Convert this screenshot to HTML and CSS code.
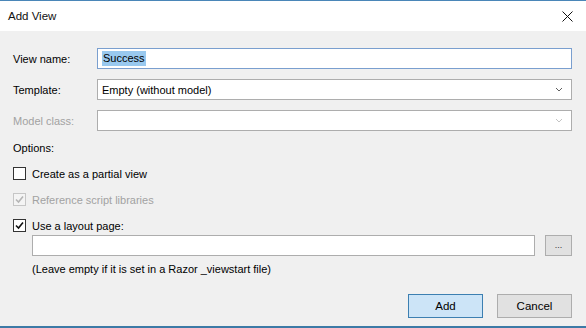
FILE: index.html
```html
<!DOCTYPE html>
<html lang="en">
  <head>
    <meta charset="UTF-8" />
    <title>Add View</title>
    <link rel="stylesheet" href="styles.css">
  </head>
  <body>
    <div class="dialog">
      <header class="title-bar">
        <span class="title">Add View</span>
        <svg class="close" width="11" height="11" viewBox="0 0 11 11">
          <path d="M0.5 0.5 L10.5 10.5 M10.5 0.5 L0.5 10.5" stroke="#111" stroke-width="1" fill="none" />
        </svg>
      </header>

      <section class="content">
        <div class="form-grid">
          <label>View name:</label>
          <div class="field focused"><span class="selected">Success</span></div>

          <label>Template:</label>
          <div class="field select">
            <span>Empty (without model)</span>
            <svg class="chevron" width="8" height="5" viewBox="0 0 8 5"><path d="M1 1 L4 4 L7 1" stroke="#606060" stroke-width="1" fill="none" /></svg>
          </div>

          <label class="disabled">Model class:</label>
          <div class="field select">
            <span></span>
            <svg class="chevron" width="8" height="5" viewBox="0 0 8 5"><path d="M1 1 L4 4 L7 1" stroke="#c4c4c4" stroke-width="1" fill="none" /></svg>
          </div>
        </div>

        <div class="options-title">Options:</div>

        <div class="check-row first">
          <span class="box"></span>
          <span>Create as a partial view</span>
        </div>
        <div class="check-row disabled">
          <span class="box">
            <svg width="11" height="11" viewBox="0 0 11 11"><path d="M2 5.5 L4.5 8 L9 2.5" stroke="#b5b5b5" stroke-width="1.6" fill="none" /></svg>
          </span>
          <span>Reference script libraries</span>
        </div>
        <div class="check-row">
          <span class="box">
            <svg width="11" height="11" viewBox="0 0 11 11"><path d="M2 5.5 L4.5 8 L9 2.5" stroke="#111" stroke-width="1.6" fill="none" /></svg>
          </span>
          <span>Use a layout page:</span>
        </div>

        <div class="layout-row">
          <div class="field layout-input"></div>
          <button class="browse-btn">...</button>
        </div>
        <div class="note">(Leave empty if it is set in a Razor _viewstart file)</div>

        <div class="actions">
          <button class="btn default">Add</button>
          <button class="btn">Cancel</button>
        </div>
      </section>
    </div>
  </body>
</html>
```

FILE: styles.css
```css
* {
  margin: 0;
  padding: 0;
  box-sizing: border-box;
  font-family: "Liberation Sans", Arial, sans-serif;
}

body {
  width: 586px;
  height: 328px;
  overflow: hidden;
  font-size: 11px;
  color: #000;
}

.dialog {
  width: 586px;
  height: 328px;
  background: #f0f0f0;
  border-top: 1px solid #4a86b8;
  border-bottom: 2px solid #3d7aa6;
  display: flex;
  flex-direction: column;
}

.title-bar {
  height: 30px;
  background: #fff;
  display: flex;
  align-items: center;
  justify-content: space-between;
  padding: 0 13px 0 8px;
}

.title {
  font-size: 11.5px;
  color: #111;
}

.content {
  padding: 17px 14px 0 13px;
  display: flex;
  flex-direction: column;
}

.form-grid {
  display: grid;
  grid-template-columns: 84px 1fr;
  row-gap: 10px;
}

.form-grid label {
  display: flex;
  align-items: center;
  height: 21px;
}

.disabled {
  color: #a2a2a2;
}

.field {
  height: 21px;
  background: #fff;
  border: 1px solid #adadad;
  display: flex;
  align-items: center;
  justify-content: space-between;
  padding: 0 8px 0 4px;
}

.field.focused {
  border-color: #7a9fcf;
}

.selected {
  background: #99c9ef;
  padding: 0 1px;
  line-height: 15px;
}

.chevron {
  display: block;
}

.options-title {
  margin-top: 9px;
  height: 16px;
  line-height: 16px;
}

.check-row {
  display: flex;
  align-items: center;
  gap: 6px;
  height: 13px;
  margin-top: 13px;
}

.check-row.first {
  margin-top: 11px;
}

.box {
  width: 13px;
  height: 13px;
  border: 1px solid #333;
  background: #fff;
  display: flex;
  align-items: center;
  justify-content: center;
}

.check-row.disabled .box {
  border-color: #c6c6c6;
  background: #f4f4f4;
}

.layout-row {
  margin-top: 3px;
  padding-left: 19px;
  display: flex;
  gap: 10px;
}

.layout-input {
  flex: 1;
}

.browse-btn {
  width: 27px;
  height: 21px;
  background: #e1e1e1;
  border: 1px solid #adadad;
  font-size: 9px;
  color: #333;
  line-height: 1;
}

.note {
  margin-top: 5px;
  padding-left: 19px;
  height: 16px;
  line-height: 16px;
}

.actions {
  margin-top: 17px;
  display: flex;
  justify-content: flex-end;
  gap: 14px;
}

.btn {
  width: 75px;
  height: 24px;
  background: #e1e1e1;
  border: 1px solid #adadad;
  font-size: 11.5px;
  color: #000;
}

.btn.default {
  background: #cce4f7;
  border-color: #3c7fb1;
}
```
